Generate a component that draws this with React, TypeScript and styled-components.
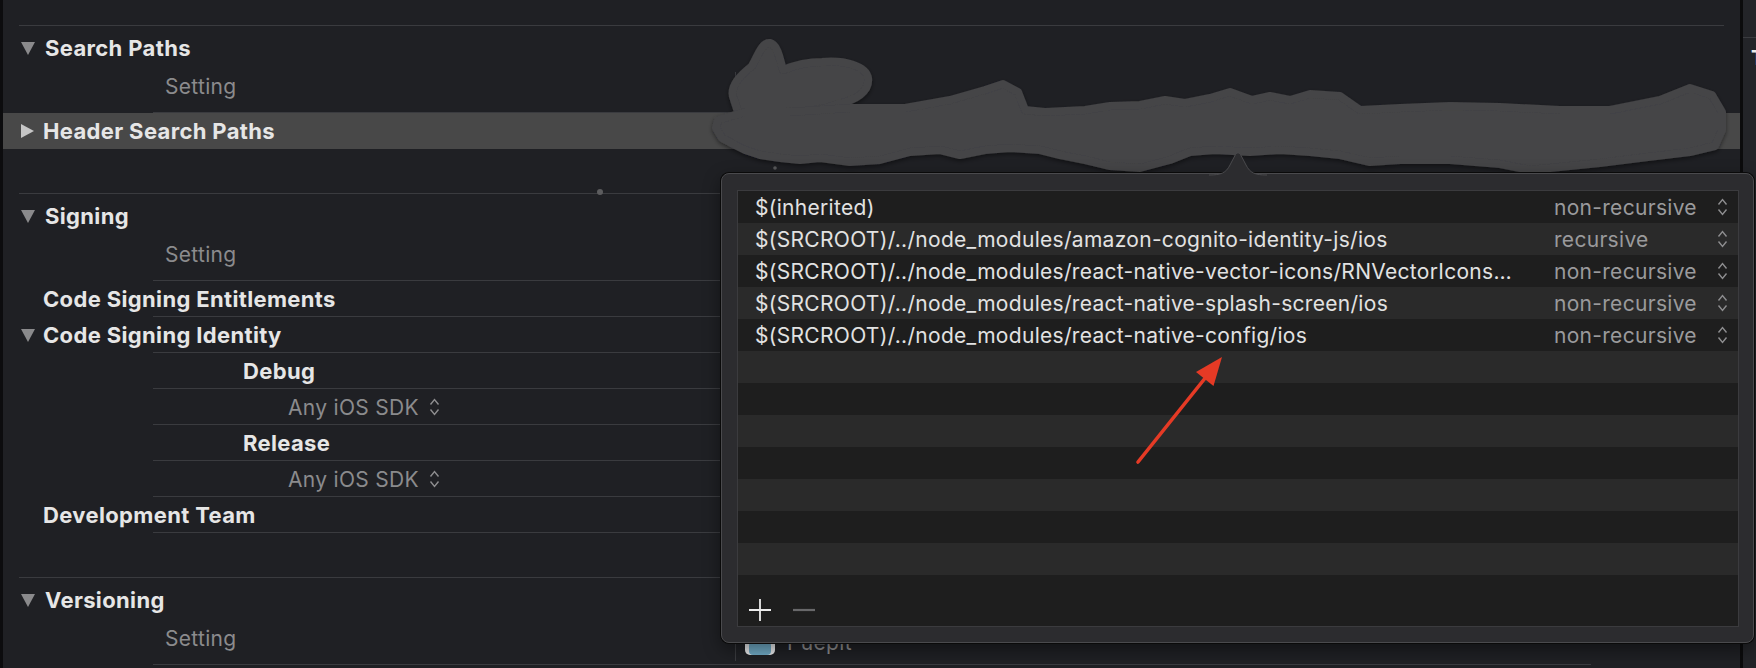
import React from "react";
import styled, { createGlobalStyle } from "styled-components";

const GlobalStyle = createGlobalStyle`
  html, body {
    margin: 0;
    padding: 0;
    background: #1f2024;
  }
  body {
    width: 1756px;
    height: 668px;
    overflow: hidden;
    font-family: Inter, "Liberation Sans", sans-serif;
    -webkit-font-smoothing: antialiased;
  }
`;

const Window = styled.div`
  position: relative;
  display: flex;
  width: 1756px;
  height: 668px;
  overflow: hidden;
  background: #1f2024;
`;

const Editor = styled.div`
  box-sizing: border-box;
  flex: 0 0 1740px;
  display: flex;
  flex-direction: column;
  padding-top: 25px;
  border-left: 3px solid #0c0c0e;
`;

const PaneSplit = styled.div`
  flex: 0 0 3px;
  background: #0b0b0c;
`;

const Inspector = styled.div`
  flex: 1;
  overflow: hidden;
  background: #232428;
`;

const InspectorHead = styled.div`
  height: 37px;
  border-bottom: 1px solid #3a3b3f;
`;

const InspectorTitle = styled.div`
  padding: 8px 0 0 8px;
  color: #ececec;
  font-size: 20px;
  font-weight: 700;
  white-space: nowrap;
`;

/* ---------- settings list ---------- */

const Section = styled.section`
  display: flex;
  flex-direction: column;
`;

const Divider = styled.div`
  height: 1px;
  margin: 0 16px;
  background: #3a3b3f;
`;

const TitleRow = styled.div`
  height: 44px;
  display: flex;
  align-items: center;
  gap: 10px;
  padding-left: 17px;
`;

const Disclosure = styled.span<{ $open?: boolean; $light?: boolean }>`
  width: 15px;
  height: 15px;
  display: flex;
  align-items: center;
  justify-content: center;
  flex: 0 0 15px;
  &::before {
    content: "";
    width: 0;
    height: 0;
    ${(p) =>
      p.$open
        ? `border-left: 7px solid transparent; border-right: 7px solid transparent; border-top: 13px solid ${p.$light ? "#c6c6c6" : "#8a8a8c"};`
        : `border-top: 7.5px solid transparent; border-bottom: 7.5px solid transparent; border-left: 13px solid ${p.$light ? "#c6c6c6" : "#8a8a8c"};`}
  }
`;

const TitleText = styled.span`
  color: #e6e6e6;
  font-size: 22px;
  font-weight: 700;
  letter-spacing: 0.35px;
`;

const rowLine = `linear-gradient(#3a3b3f, #3a3b3f) no-repeat left 150px bottom / 1438px 1px`;

const ColumnRow = styled.div`
  box-sizing: border-box;
  height: 43px;
  display: flex;
  align-items: stretch;
  padding-left: 162px;
  background: ${rowLine};
`;

const SettingHead = styled.div`
  flex: 0 0 570px;
  padding-top: 6px;
  line-height: 22px;
  color: #8b8b8d;
  font-size: 21px;
  letter-spacing: 0.3px;
`;

const TargetHead = styled.div`
  display: flex;
  align-items: center;
  gap: 12px;
  margin: 2px 0 4px;
  padding-left: 9px;
  border-left: 1px solid #3a3b3f;
  color: #8b8b8d;
  font-size: 21px;
  letter-spacing: 0.3px;
`;

const TargetIcon = styled.span`
  width: 30px;
  height: 24px;
  border-radius: 5px;
  background: #e9eaec;
  display: flex;
  align-items: flex-end;
  justify-content: center;
  overflow: hidden;
  &::before {
    content: "";
    width: 22px;
    height: 18px;
    border-radius: 50% 50% 4px 4px;
    background: #6fa9c4;
  }
`;

const DataRow = styled.div<{ $indent: number; $selected?: boolean }>`
  box-sizing: border-box;
  height: 36px;
  display: flex;
  align-items: center;
  gap: 8px;
  padding-left: ${(p) => p.$indent}px;
  background: ${(p) => (p.$selected ? "#484848" : rowLine)};
`;

const RowLabel = styled.span`
  color: #e6e6e6;
  font-size: 22px;
  font-weight: 700;
  letter-spacing: 0.35px;
`;

const RowValue = styled.span`
  display: flex;
  align-items: center;
  gap: 10px;
  color: #8b8b8d;
  font-size: 21px;
  letter-spacing: 0.3px;
`;

const SectionEnd = styled.div`
  height: 44px;
`;

/* ---------- popover ---------- */

const Popover = styled.div`
  position: absolute;
  left: 721px;
  top: 173px;
  box-sizing: border-box;
  width: 1033px;
  height: 470px;
  padding: 16px 14px 15px 15px;
  border: 1px solid #4a4a4d;
  border-radius: 8px;
  background: #2c2c2f;
  box-shadow: 0 0 0 1px #0a0a0a, 0 6px 18px rgba(0, 0, 0, 0.45);
  z-index: 2;
`;

const PopoverTip = styled.svg`
  position: absolute;
  left: 487px;
  top: -22px;
`;

const PathTable = styled.div`
  box-sizing: border-box;
  height: 100%;
  display: flex;
  flex-direction: column;
  border: 1px solid #3b3b3e;
  background: #1e1e1e;
`;

const PathRow = styled.div<{ $alt: boolean }>`
  flex: 0 0 32px;
  display: grid;
  grid-template-columns: 780px 1fr 11px;
  align-items: center;
  padding: 0 10px 0 17px;
  background: ${(p) => (p.$alt ? "#2a2a2a" : "#1e1e1e")};
  font-size: 21px;
  letter-spacing: 0.3px;
`;

const PathText = styled.span`
  color: #e2e2e2;
  white-space: nowrap;
  overflow: hidden;
  text-overflow: ellipsis;
`;

const ModeText = styled.span`
  padding-left: 19px;
  color: #9a9a9c;
  white-space: nowrap;
`;

const TableFooter = styled.div`
  flex: 1;
  display: flex;
  align-items: flex-end;
  gap: 22px;
  padding: 0 0 5px 11px;
`;

const FooterButton = styled.span`
  display: flex;
  width: 22px;
  height: 22px;
`;

const Overlay = styled.svg<{ $front?: boolean }>`
  position: absolute;
  left: 0;
  top: 0;
  pointer-events: none;
  z-index: ${(p) => (p.$front ? 3 : 1)};
`;

function Stepper({ color = "#8e8e90" }: { color?: string }) {
  return (
    <svg width="11" height="20" viewBox="0 0 11 20">
      <path d="M1.5 7.5 L5.5 2.5 L9.5 7.5" fill="none" stroke={color} strokeWidth="1.4" />
      <path d="M1.5 12.5 L5.5 17.5 L9.5 12.5" fill="none" stroke={color} strokeWidth="1.4" />
    </svg>
  );
}

function ColumnHeader({ target }: { target?: string }) {
  return (
    <ColumnRow>
      <SettingHead>Setting</SettingHead>
      <TargetHead>
        <TargetIcon />
        {target}
      </TargetHead>
    </ColumnRow>
  );
}

const paths = [
  { path: "$(inherited)", mode: "non-recursive" },
  { path: "$(SRCROOT)/../node_modules/amazon-cognito-identity-js/ios", mode: "recursive" },
  { path: "$(SRCROOT)/../node_modules/react-native-vector-icons/RNVectorIcons…", mode: "non-recursive" },
  { path: "$(SRCROOT)/../node_modules/react-native-splash-screen/ios", mode: "non-recursive" },
  { path: "$(SRCROOT)/../node_modules/react-native-config/ios", mode: "non-recursive" },
];

const ROW_COUNT = 12;

export default function App() {
  const rows = Array.from({ length: ROW_COUNT }, (_, i) => paths[i] ?? null);

  return (
    <Window>
      <GlobalStyle />
      <Editor>
        <Section>
          <Divider />
          <TitleRow>
            <Disclosure $open />
            <TitleText>Search Paths</TitleText>
          </TitleRow>
          <ColumnHeader target="Pueplt" />
          <DataRow $indent={17} $selected>
            <Disclosure $light />
            <RowLabel>Header Search Paths</RowLabel>
          </DataRow>
          <SectionEnd />
        </Section>

        <Section>
          <Divider />
          <TitleRow>
            <Disclosure $open />
            <TitleText>Signing</TitleText>
          </TitleRow>
          {/* the target column of this header sits under the popover */}
          <ColumnHeader />
          <DataRow $indent={40}>
            <RowLabel>Code Signing Entitlements</RowLabel>
          </DataRow>
          <DataRow $indent={17}>
            <Disclosure $open />
            <RowLabel>Code Signing Identity</RowLabel>
          </DataRow>
          <DataRow $indent={240}>
            <RowLabel>Debug</RowLabel>
          </DataRow>
          <DataRow $indent={285}>
            <RowValue>
              Any iOS SDK <Stepper />
            </RowValue>
          </DataRow>
          <DataRow $indent={240}>
            <RowLabel>Release</RowLabel>
          </DataRow>
          <DataRow $indent={285}>
            <RowValue>
              Any iOS SDK <Stepper />
            </RowValue>
          </DataRow>
          <DataRow $indent={40}>
            <RowLabel>Development Team</RowLabel>
          </DataRow>
          <SectionEnd />
        </Section>

        <Section>
          <Divider />
          <TitleRow>
            <Disclosure $open />
            <TitleText>Versioning</TitleText>
          </TitleRow>
          <ColumnHeader target="Pueplt" />
        </Section>
      </Editor>
      <PaneSplit />
      <Inspector>
        <InspectorHead />
        <InspectorTitle>Type</InspectorTitle>
      </Inspector>

      {/* redaction scribble drawn over the header search path value */}
      <Overlay width="1756" height="668">
        <defs>
          <filter id="blobShadow" x="-5%" y="-20%" width="110%" height="140%">
            <feDropShadow dx="0" dy="2" stdDeviation="2" floodColor="#000" floodOpacity="0.45" />
          </filter>
        </defs>
        <g fill="#444446" stroke="#444446" strokeWidth="8" strokeLinejoin="round" filter="url(#blobShadow)">
          <path d="M734 100 C728 86 742 74 752 66 C758 55 762 42 770 43 C778 45 780 60 783 70 C795 65 808 62 822 62 C845 60 866 66 868 78 C870 92 855 100 838 104 C820 111 800 112 785 112 C770 118 745 120 738 112 Z" />
          <path d="M718 120 L745 112 L790 112 L850 108 L905 108 L950 100 L985 90 L1003 84 L1018 92 L1025 110 L1045 112 L1085 110 L1110 106 L1140 105 L1165 100 L1185 103 L1210 98 L1230 92 L1252 100 L1270 96 L1290 100 L1310 94 L1340 96 L1360 110 L1400 108 L1450 106 L1500 107 L1560 110 L1610 110 L1660 100 L1690 88 L1712 95 L1722 112 L1722 130 L1715 146 L1690 152 L1640 158 L1600 163 L1560 167 L1530 170 L1500 164 L1450 160 L1400 160 L1370 162 L1340 155 L1310 152 L1280 150 L1250 152 L1215 150 L1190 152 L1170 160 L1140 168 L1110 166 L1085 160 L1060 155 L1040 150 L1010 148 L985 150 L960 155 L940 150 L910 152 L880 160 L850 162 L820 158 L800 160 L780 158 L760 155 L745 150 L735 145 L722 138 L716 128 Z" />
        </g>
        <circle cx="600" cy="192" r="3" fill="#5c5c5e" />
        <circle cx="775" cy="168" r="1.8" fill="#58585a" />
      </Overlay>

      <Popover>
        <PopoverTip width="58" height="24" viewBox="0 0 58 24">
          <path d="M0 23 C12 23 17 21 21 13 L26.5 2.5 Q29 -1 31.5 2.5 L37 13 C41 21 46 23 58 23 L58 24 L0 24 Z" fill="#2c2c2f" />
          <path d="M0 23 C12 23 17 21 21 13 L26.5 2.5 Q29 -1 31.5 2.5 L37 13 C41 21 46 23 58 23" fill="none" stroke="#4a4a4d" strokeWidth="1" />
        </PopoverTip>
        <PathTable>
          {rows.map((r, i) => (
            <PathRow key={i} $alt={i % 2 === 1}>
              <PathText>{r?.path}</PathText>
              <ModeText>{r?.mode}</ModeText>
              {r ? <Stepper /> : <span />}
            </PathRow>
          ))}
          <TableFooter>
            <FooterButton>
              <svg width="22" height="22" viewBox="0 0 22 22">
                <path d="M11 0 V22 M0 11 H22" stroke="#ececec" strokeWidth="1.8" />
              </svg>
            </FooterButton>
            <FooterButton>
              <svg width="22" height="22" viewBox="0 0 22 22">
                <path d="M0 11 H22" stroke="#68686a" strokeWidth="2.2" />
              </svg>
            </FooterButton>
          </TableFooter>
        </PathTable>
      </Popover>

      {/* red annotation arrow */}
      <Overlay width="1756" height="668" $front>
        <line x1="1138" y1="462" x2="1206" y2="377" stroke="#e53a25" strokeWidth="3.6" strokeLinecap="round" />
        <path d="M1222 357 L1213.5 386 L1196 372 Z" fill="#e53a25" />
      </Overlay>
    </Window>
  );
}
